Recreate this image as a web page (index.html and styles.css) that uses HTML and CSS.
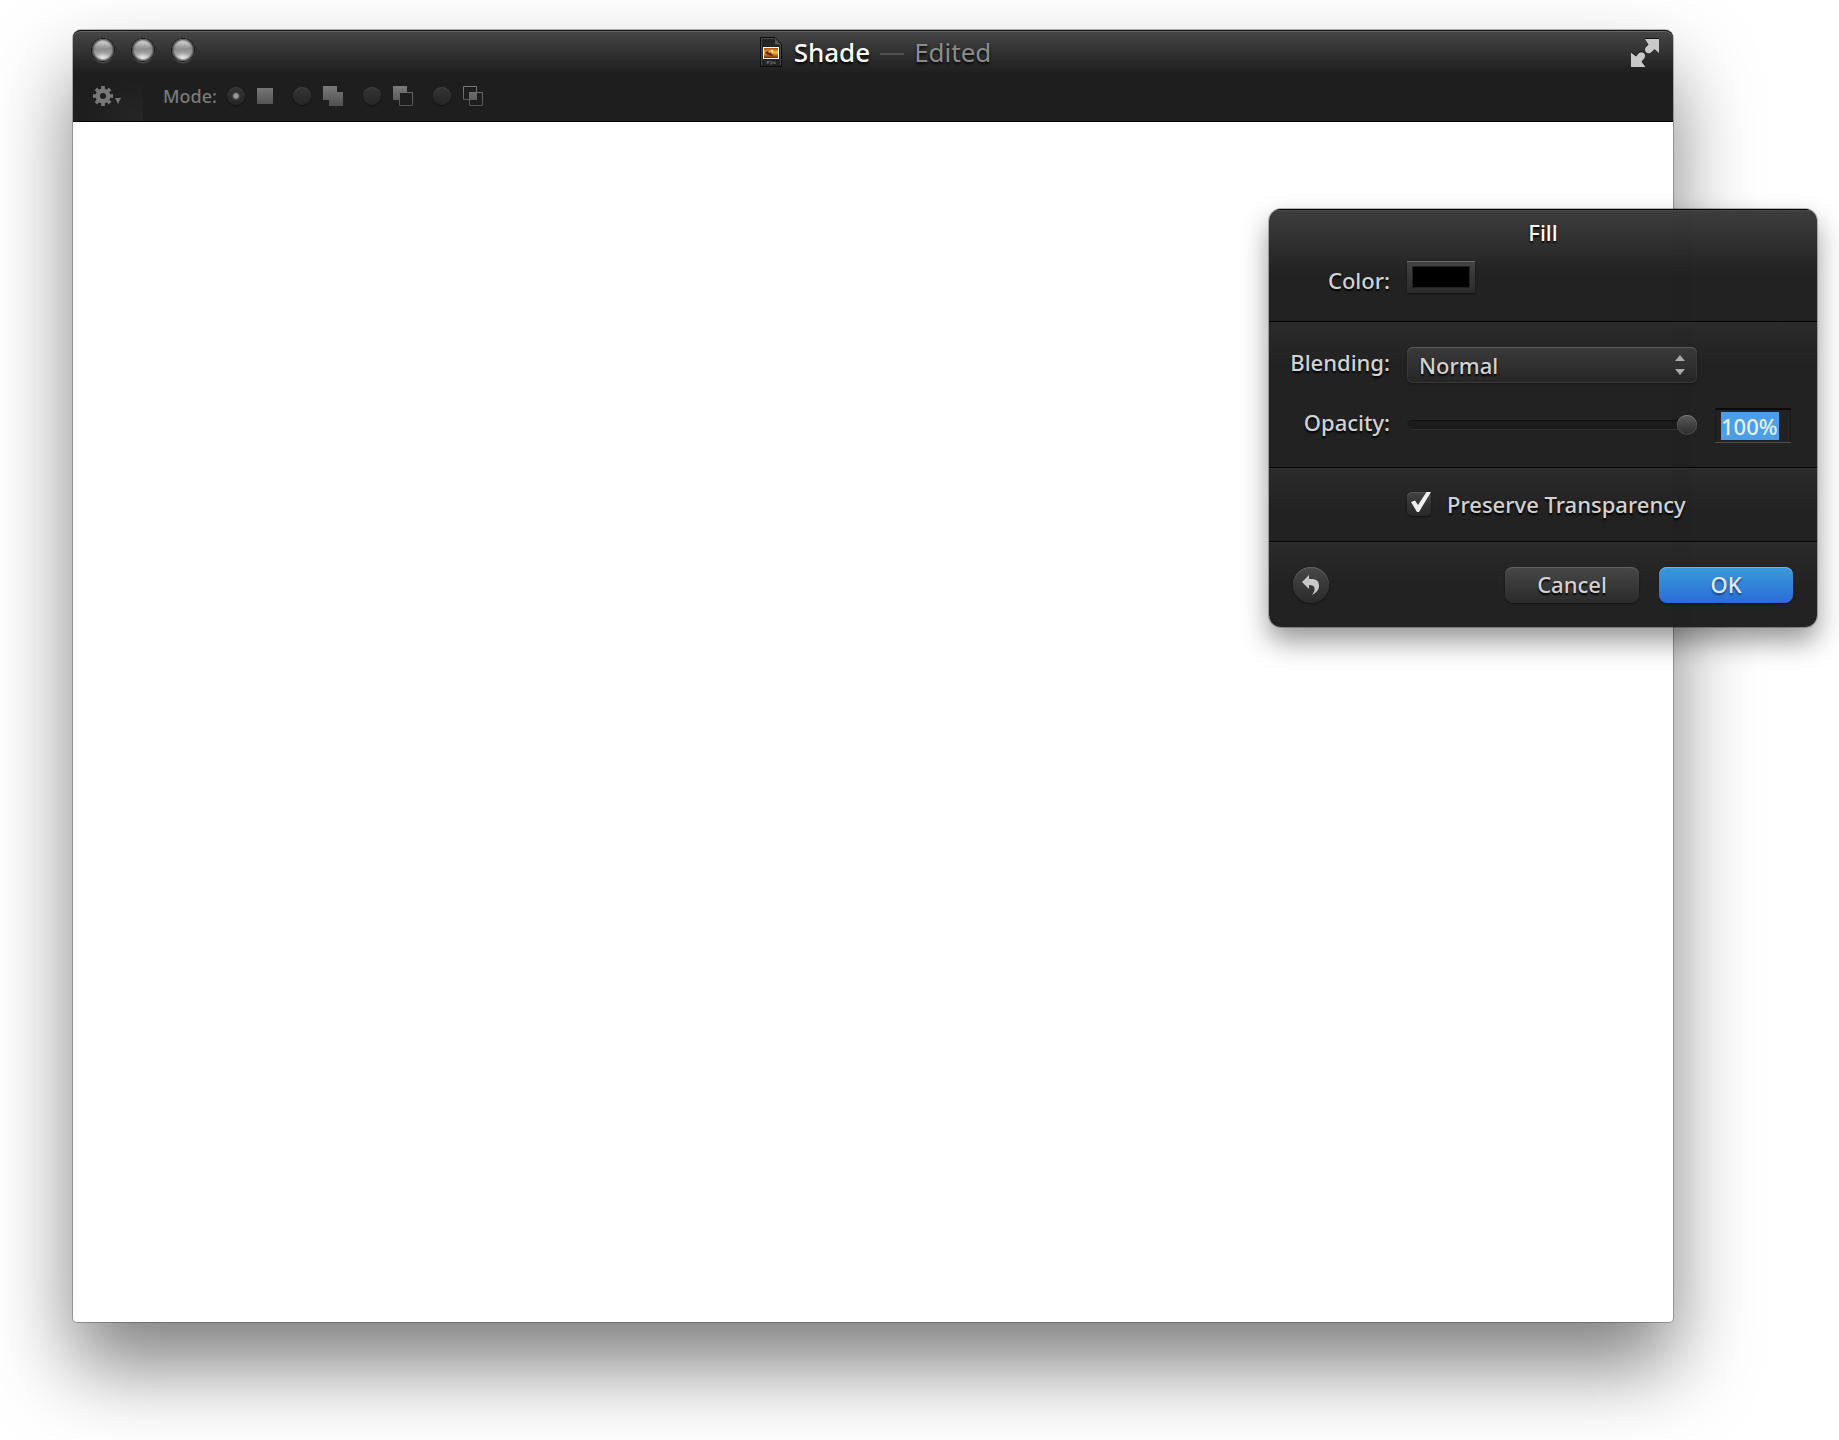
FILE: index.html
```html
<!DOCTYPE html>
<html lang="en">
<head>
<meta charset="utf-8">
<title>Shade</title>
<link rel="stylesheet" href="styles.css">
</head>
<body>
<main class="window">
  <header class="chrome">
    <div class="titlebar">
      <div class="lights">
        <button class="light" aria-label="Close"></button>
        <button class="light" aria-label="Minimize"></button>
        <button class="light" aria-label="Zoom"></button>
      </div>
      <h1 class="title">
        <svg class="doc" width="22" height="30" viewBox="0 0 22 30" aria-hidden="true">
          <defs><linearGradient id="sky" x1="0" y1="0" x2="0" y2="1"><stop offset="0" stop-color="#a84a0c"/><stop offset=".45" stop-color="#ffb83c"/><stop offset=".65" stop-color="#e4781a"/><stop offset="1" stop-color="#6c2806"/></linearGradient></defs>
          <path d="M.5.5H15L21.500 7.500V29.500H.5Z" fill="#242424" stroke="#0c0c0c"/>
          <path d="M1.500 28V1.500H14.500L20.500 8V28" fill="none" stroke="#4b4b4b"/>
          <path d="M15 1V7.500H21Z" fill="#555"/>
          <rect x="3" y="10" width="16" height="12" fill="#fff"/>
          <rect x="4" y="11" width="14" height="10" fill="url(#sky)"/>
          <path d="M5 15l3-1 1 2 3-1-1 2 3 1-3 1-5-2z" fill="#64250a"/>
          <circle cx="12" cy="14" r="1.500" fill="#ffe98a"/>
          <path d="M7 27V24.500H9V26H7M10 24.500H11.500M10 27H11.500V25.500M13 27V24.500L15 27V24.500" fill="none" stroke="#777" stroke-width=".8"/>
        </svg>
        <span class="name">Shade</span>
        <span class="dash"></span>
        <span class="state">Edited</span>
      </h1>
      <button class="full" aria-label="Full screen">
        <svg width="28" height="31" viewBox="0 0 28 31">
          <path fill="#111" transform="translate(0 -1)" d="M14 2H28V16L23.500 12 20.500 15C18 17.500 14 16 14 12.500L14.500 10.500 17.500 7.500ZM0 15.500L5 19.500 7.500 16.500C10 14 14.500 15.500 14 19L13.500 21 10.500 24.500 14.500 30H0Z"/>
          <path fill="#c9c9c9" d="M14 2H28V16L23.500 12 20.500 15C18 17.500 14 16 14 12.500L14.500 10.500 17.500 7.500ZM0 15.500L5 19.500 7.500 16.500C10 14 14.500 15.500 14 19L13.500 21 10.500 24.500 14.500 30H0Z"/>
        </svg>
      </button>
    </div>
    <div class="toolbar">
      <button class="gear" aria-label="Actions">
        <svg width="30" height="22" viewBox="0 0 30 22">
          <g transform="translate(11 11)" fill="#777">
            <path fill-rule="evenodd" d="M0-7.500A7.500 7.500 0 1 1 0 7.500A7.500 7.500 0 1 1 0-7.500ZM0-3A3 3 0 1 0 0 3A3 3 0 1 0 0-3Z"/>
            <path d="M-2-10H2L1.500-6H-1.500ZM-2 10H2L1.500 6H-1.500ZM-10-2V2L-6 1.500V-1.500ZM10-2V2L6 1.500V-1.500Z"/>
            <path transform="rotate(45)" d="M-2-10H2L1.500-6H-1.500ZM-2 10H2L1.500 6H-1.500ZM-10-2V2L-6 1.500V-1.500ZM10-2V2L6 1.500V-1.500Z"/>
          </g>
          <path d="M23 13H29L26 19Z" fill="#777"/>
        </svg>
      </button>
      <div class="modes" role="radiogroup" aria-labelledby="mode">
        <span class="mode-label" id="mode">Mode:</span>
        <label class="mode"><input type="radio" name="mode" aria-label="Replace" checked>
          <svg width="16" height="20" viewBox="0 0 16 20">
            <defs><linearGradient id="g" gradientUnits="userSpaceOnUse" x1="0" y1="0" x2="0" y2="20"><stop offset="0" stop-color="#7a7a7a"/><stop offset="1" stop-color="#505050"/></linearGradient></defs>
            <path d="M0 2H16V18H0Z" fill="url(#g)"/></svg></label>
        <label class="mode"><input type="radio" name="mode" aria-label="Add">
          <svg width="20" height="20" viewBox="0 0 20 20"><path d="M0 0H14V6H20V20H6V14H0Z" fill="url(#g)"/></svg></label>
        <label class="mode"><input type="radio" name="mode" aria-label="Subtract">
          <svg width="20" height="20" viewBox="0 0 20 20"><path d="M0 0H14V6H6V14H0Z" fill="url(#g)"/><path d="M6.500 6.500H19.500V19.500H6.500Z" fill="none" stroke="url(#g)"/></svg></label>
        <label class="mode"><input type="radio" name="mode" aria-label="Intersect">
          <svg width="20" height="20" viewBox="0 0 20 20"><path d="M6 6H14V14H6Z" fill="url(#g)"/><path d="M.5.5H13.500V13.500H.5ZM6.500 6.500H19.500V19.500H6.500Z" fill="none" stroke="url(#g)"/></svg></label>
      </div>
    </div>
  </header>
  <div class="canvas"></div>
</main>

<form class="panel" aria-labelledby="panel-title">
  <section class="section section-color">
    <h2 class="panel-title" id="panel-title">Fill</h2>
    <div class="row">
      <label class="label" for="color">Color:</label>
      <button type="button" class="well" id="color"><span class="swatch"></span></button>
    </div>
  </section>
  <section class="section section-blend">
    <div class="row">
      <label class="label" for="blend">Blending:</label>
      <div class="pick">
        <select class="select" id="blend"><option>Normal</option></select>
        <svg class="arrows" width="10" height="20" viewBox="0 0 10 20" aria-hidden="true"><path d="M0 6L5 0 10 6ZM0 14H10L5 20Z" fill="#aaa"/></svg>
      </div>
    </div>
    <div class="row">
      <label class="label" for="opacity">Opacity:</label>
      <input class="slider" id="opacity" type="range" min="0" max="100" value="100">
      <input class="value" type="text" value="100%" aria-label="Opacity value">
    </div>
  </section>
  <section class="section section-keep">
    <label class="keep">
      <span class="box"><input type="checkbox" class="check" checked>
        <svg class="tick" width="20" height="20" viewBox="0 0 20 20" aria-hidden="true"><path d="M0 10L4 8.500 7 13 15.500 0H20L8 20H6Z" fill="#f0f0f0"/></svg></span>
      <span>Preserve Transparency</span>
    </label>
  </section>
  <footer class="section section-actions">
    <button type="button" class="reset" aria-label="Reset">
      <svg width="18" height="20" viewBox="0 0 18 20"><path d="M0 7L7 0V4H10C15 4 17 7 17 11C17 15 14 18 10 20C12 17 13 15 12.500 13C12 11 10.500 10 7 10V14Z" fill="#c8c8c8"/></svg>
    </button>
    <button type="button" class="btn">Cancel</button>
    <button type="submit" class="btn btn-ok">OK</button>
  </footer>
</form>
</body>
</html>
```
FILE: styles.css
```css
* { box-sizing: border-box; }

body {
  margin: 0;
  min-height: 100vh;
  padding: 30px 166px 118px 73px;
  display: flex;
  background: #fff;
  font-family: "Noto Sans", "Open Sans", sans-serif;
  overflow: hidden;
}

button, input, select {
  margin: 0;
  padding: 0;
  border: 0;
  background: none;
  font: inherit;
  color: inherit;
  outline: 0;
}

svg { display: block; flex: none; }

/* Document window */
.window {
  flex: 1;
  display: flex;
  flex-direction: column;
  border-radius: 8px 8px 4px 4px;
  background: #fff;
  box-shadow: 0 0 0 1px rgba(0, 0, 0, .25), 0 44px 80px rgba(0, 0, 0, .5);
}

.chrome {
  border-radius: 8px 8px 0 0;
  border-bottom: 1px solid #000;
  background: linear-gradient(#464646, #1e1e1e 44px);
  box-shadow: inset 0 1px #111, inset 0 2px #666;
}

.titlebar {
  height: 44px;
  padding: 0 14px 0 19px;
  display: grid;
  grid-template-columns: 1fr auto 1fr;
  align-items: center;
}

.lights { display: flex; gap: 18px; padding-bottom: 4px; }

.light {
  width: 22px;
  height: 22px;
  border-radius: 50%;
  background:
    radial-gradient(ellipse 9px 6px at 50% 90%, #f4f4f4, transparent),
    linear-gradient(#e8e8e8, #8c8c8c 45%, #c4c4c4);
  box-shadow: inset 0 0 2px 1px #333, 0 0 0 1px #1c1c1c, 0 2px 1px #5c5c5c;
}

.title {
  margin: 0;
  display: flex;
  align-items: center;
  font-size: 26px;
  line-height: 32px;
  font-weight: 400;
  color: #fff;
  text-shadow: 0 2px 3px #000;
}

.name { margin-left: 12px; font-weight: 500; }
.dash { width: 24px; height: 2px; margin: 4px 10px 0; background: #505050; }
.state { color: #8c8c8c; }
.full { justify-self: end; }

.toolbar { display: flex; height: 47px; }

.gear {
  width: 70px;
  padding: 0 0 4px 19px;
  display: flex;
  align-items: center;
  background: radial-gradient(ellipse 60px 44px at 100% 100%, #262626, transparent);
}

.modes {
  padding: 0 0 4px 20px;
  display: flex;
  align-items: center;
  gap: 20px;
}

.mode-label {
  width: 44px;
  font-size: 18px;
  line-height: 24px;
  font-weight: 500;
  color: #7a7a7a;
}

.mode {
  display: flex;
  align-items: center;
  gap: 12px;
}

.mode input {
  appearance: none;
  width: 18px;
  height: 18px;
  border-radius: 50%;
  background: linear-gradient(#343434, #262626);
  box-shadow: inset 0 1px #404040, 0 1px 1px #111;
}

.mode input:checked {
  background: radial-gradient(circle, #999 2px, transparent 4px), linear-gradient(#343434, #262626);
}

/* Floating fill panel */
.panel {
  position: absolute;
  top: 209px;
  right: 22px;
  width: 548px;
  border-radius: 12px;
  overflow: hidden;
  background: rgba(30, 30, 30, .98);
  box-shadow: 0 0 0 1px rgba(0, 0, 0, .25), 0 14px 28px rgba(0, 0, 0, .42);
  font-size: 22px;
  line-height: 30px;
  font-weight: 500;
  color: #d2d2d2;
  text-shadow: 0 2px 2px #000;
}

.section {
  border-top: 1px solid #000;
  padding: 0 24px;
  background: linear-gradient(rgba(255, 255, 255, .04), transparent 44px);
  box-shadow: inset 0 1px #323232;
}

.section-color {
  height: 112px;
  padding-top: 7px;
  background: linear-gradient(rgba(255, 255, 255, .12), transparent 66px);
  box-shadow: inset 0 1px #4a4a4a;
}

.panel-title {
  margin: 0;
  font-size: 22px;
  line-height: 30px;
  font-weight: 500;
  text-align: center;
  color: #fff;
}

.row { display: flex; align-items: center; }

.label {
  width: 97px;
  margin-right: 17px;
  padding-bottom: 6px;
  text-align: right;
  white-space: nowrap;
  display: flex;
  justify-content: flex-end;
}

.section-color .row { padding-top: 14px; align-items: flex-start; }
.section-color .label { padding: 4px 0 0; }

.well {
  width: 68px;
  height: 32px;
  padding: 6px;
  background: linear-gradient(#444, #2a2a2a);
  box-shadow: inset 0 1px #6a6a6a, 0 1px 2px #111;
}

.swatch { display: block; height: 20px; background: #000; box-shadow: 0 0 0 1px #222; }

.section-blend {
  height: 146px;
  padding-top: 25px;
  display: flex;
  flex-direction: column;
  gap: 24px;
}

.pick { position: relative; width: 290px; }

.select {
  appearance: none;
  display: block;
  width: 100%;
  height: 36px;
  padding-left: 12px;
  border-radius: 6px;
  background: linear-gradient(#3a3a3a, #262626);
  box-shadow: inset 0 1px #5a5a5a, inset 0 0 0 1px #383838, 0 1px 2px #161616;
  text-shadow: inherit;
}

.arrows { position: absolute; right: 12px; top: 8px; }

.slider { appearance: none; width: 290px; height: 20px; }

.slider::-webkit-slider-runnable-track {
  height: 10px;
  border-radius: 5px;
  background: #1c1c1c;
  box-shadow: inset 0 1px 1px #0e0e0e, inset 0 0 0 1px #303030;
}

.slider::-webkit-slider-thumb {
  appearance: none;
  width: 20px;
  height: 20px;
  margin-top: -5px;
  border-radius: 50%;
  background: linear-gradient(#5a5a5a, #2c2c2c);
  box-shadow: inset 0 1px #7c7c7c, inset 0 0 0 1px #484848;
}

/* The value is shown highlighted, ready to be typed over */
.value {
  width: 76px;
  height: 35px;
  margin-left: 18px;
  padding: 4px 12px 3px 6px;
  background: #4a9fe8 content-box;
  box-shadow: inset 0 2px #0c0c0c, inset 0 -1px #505050, inset 0 0 0 1px #1a1a1a;
  color: #e4f0fb;
}

.section-keep { height: 74px; padding: 21px 24px 0 138px; }
.keep { display: flex; align-items: center; gap: 16px; }
.box { position: relative; display: flex; }

.check {
  appearance: none;
  width: 24px;
  height: 24px;
  border-radius: 5px;
  background: linear-gradient(#424242, #282828);
  box-shadow: inset 0 1px #585858, 0 1px 2px #111;
}

.tick { position: absolute; left: 4px; top: 0; }
.check:not(:checked) + .tick { display: none; }

.section-actions {
  height: 86px;
  padding-top: 25px;
  display: flex;
  gap: 20px;
}

.reset, .btn {
  height: 36px;
  background: linear-gradient(#484848, #2a2a2a);
  box-shadow: inset 0 1px #626262, 0 1px 2px #111;
}

.reset {
  width: 36px;
  margin-right: auto;
  border-radius: 50%;
  display: flex;
  align-items: center;
  justify-content: center;
}

.btn { width: 134px; padding-bottom: 2px; border-radius: 8px; text-shadow: inherit; }

.btn-ok {
  background: linear-gradient(#3a9ad8, #2a6cd8);
  box-shadow: inset 0 1px #6cb4e8, 0 1px 2px #111;
  color: #e0e8f4;
  text-shadow: 0 2px 2px #1a4480;
}
```
